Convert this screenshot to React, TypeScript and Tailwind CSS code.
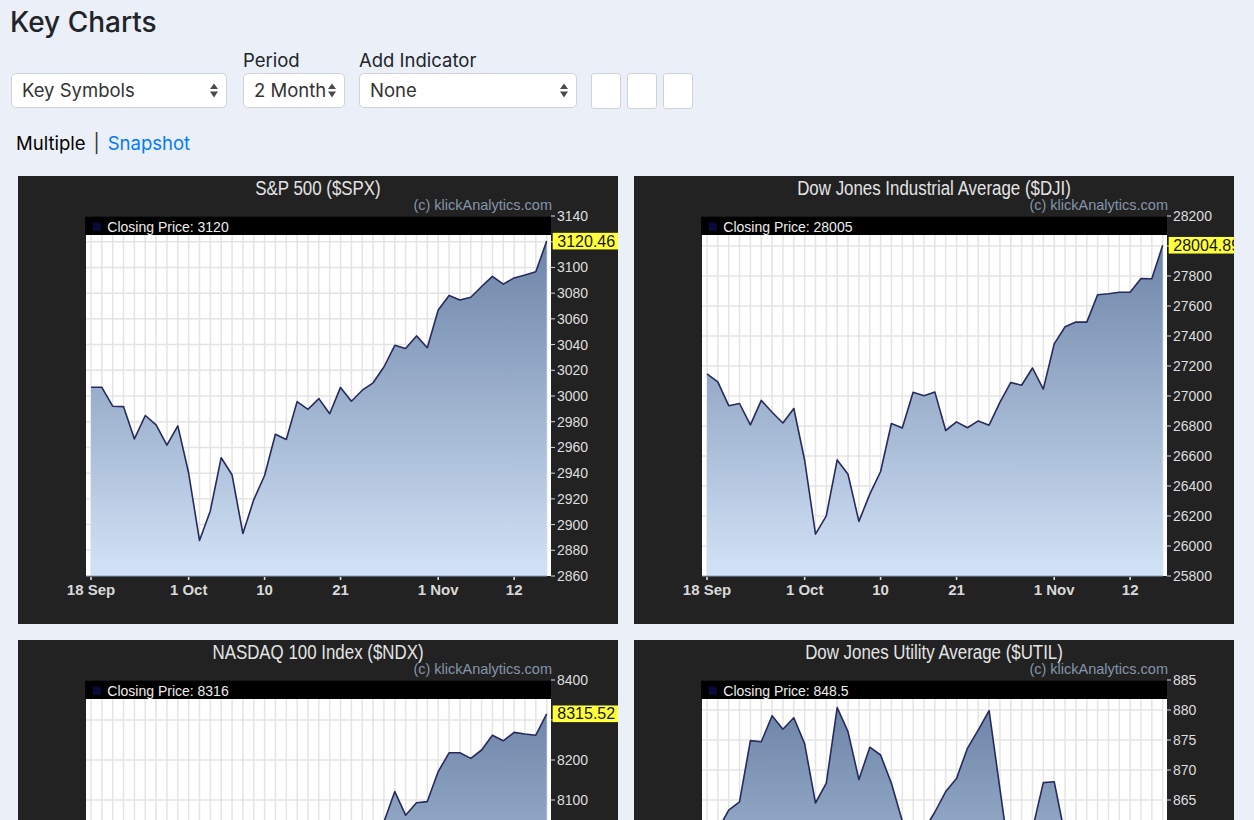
import React from "react";

type ChartSpec = {
  id: string;
  title: string;
  legend: string;
  last: string;
  top: number;
  step: number;
  count: number;
  data: number[];
};

const X0 = 73;
const DX = 10.85;
const PT = 59;
const PB = 400;
const PL = 68;
const PR = 533;

const xTicks = [
  { i: 0, label: "18 Sep" },
  { i: 9, label: "1 Oct" },
  { i: 16, label: "10" },
  { i: 23, label: "21" },
  { i: 32, label: "1 Nov" },
  { i: 39, label: "12" },
];

const charts: ChartSpec[] = [
  {
    id: "spx",
    title: "S&P 500 ($SPX)",
    legend: "Closing Price: 3120",
    last: "3120.46",
    top: 3140,
    step: 20,
    count: 14,
    data: [
      3006.73, 3006.79, 2992.07, 2991.78, 2966.6, 2984.87, 2977.62, 2961.79, 2976.74, 2940.25,
      2887.61, 2910.63, 2952.01, 2938.79, 2893.06, 2919.4, 2938.13, 2970.27, 2966.15, 2995.68,
      2989.69, 2997.95, 2986.2, 3006.72, 2995.99, 3004.52, 3010.29, 3022.55, 3039.42, 3036.89,
      3046.77, 3037.56, 3066.91, 3078.27, 3074.62, 3076.78, 3085.18, 3093.08, 3087.01, 3091.84,
      3094.04, 3096.63, 3120.46,
    ],
  },
  {
    id: "dji",
    title: "Dow Jones Industrial Average ($DJI)",
    legend: "Closing Price: 28005",
    last: "28004.89",
    top: 28200,
    step: 200,
    count: 12,
    data: [
      27147.08, 27094.79, 26935.07, 26949.99, 26807.77, 26970.71, 26891.12, 26820.25, 26916.83,
      26573.04, 26078.62, 26201.04, 26573.72, 26478.02, 26164.04, 26346.01, 26496.67, 26816.59,
      26787.36, 27024.8, 27001.98, 27025.88, 26770.2, 26827.64, 26788.1, 26833.95, 26805.53,
      26958.06, 27090.72, 27071.42, 27186.69, 27046.23, 27347.36, 27462.11, 27492.63, 27492.56,
      27674.8, 27681.24, 27691.49, 27691.49, 27783.59, 27781.96, 28004.89,
    ],
  },
  {
    id: "ndx",
    title: "NASDAQ 100 Index ($NDX)",
    legend: "Closing Price: 8316",
    last: "8315.52",
    top: 8400,
    step: 100,
    count: 9,
    data: [
      7914, 7919, 7823, 7818, 7712, 7798, 7751, 7686, 7749, 7659, 7577, 7630, 7730, 7644, 7574,
      7662, 7728, 7800, 7808, 7896, 7878, 7895, 7850, 7912, 7876, 7911, 7960, 8045, 8121, 8062,
      8093, 8096, 8171, 8218, 8218, 8204, 8225, 8262, 8248, 8269, 8265, 8262, 8315.52,
    ],
  },
  {
    id: "util",
    title: "Dow Jones Utility Average ($UTIL)",
    legend: "Closing Price: 848.5",
    last: "848.50",
    top: 885,
    step: 5,
    count: 12,
    data: [
      857, 860, 863.3, 864.7, 874.9, 874.7, 879.05, 876.8, 878.7, 874.4, 864.5, 867.8, 880.4,
      876.4, 868.4, 873.8, 872.5, 867.8, 861.5, 858, 860, 863, 866.4, 868.6, 873.6, 876.7, 879.9,
      866.9, 853.9, 855, 860.15, 867.9, 868.05, 859, 857, 858, 853, 850, 852, 849, 851, 847, 848.5,
    ],
  },
];

function Chart({ spec }: { spec: ChartSpec }) {
  const span = spec.step * spec.count;
  const toY = (v: number) => 40 + ((spec.top - v) / span) * 360;
  const pts = spec.data.map((v, i) => [X0 + i * DX, toY(v)] as const);
  const line = pts.map(([x, y]) => `${x.toFixed(1)},${y.toFixed(1)}`).join(" ");
  const lastX = pts[pts.length - 1][0];
  const lastY = toY(parseFloat(spec.last));
  const area = `M${X0},${PB} L${line.replace(/ /g, " L")} L${lastX.toFixed(1)},${PB} Z`;
  const levels = Array.from({ length: spec.count + 1 }, (_, k) => ({
    value: spec.top - k * spec.step,
    y: 40 + (k * 360) / spec.count,
  }));

  return (
    <svg width="600" height="448" viewBox="0 0 600 448" className="block bg-[#222222]">
      <defs>
        <linearGradient id={`fill-${spec.id}`} x1="0" y1={PT} x2="0" y2={PB} gradientUnits="userSpaceOnUse">
          <stop offset="0" stopColor="#6a82a6" />
          <stop offset="1" stopColor="#d3e3f7" />
        </linearGradient>
        <clipPath id={`clip-${spec.id}`}>
          <rect x={PL} y={PT} width={PR - PL} height={PB - PT} />
        </clipPath>
      </defs>

      <g fontFamily="'Liberation Sans', Arial, sans-serif">
        <text
          transform="translate(300 19) scale(0.866 1)"
          textAnchor="middle"
          fontSize="19.5"
          fill="#e4e4e4"
        >
          {spec.title}
        </text>
        <text x="534" y="34" textAnchor="end" fontSize="14.5" fill="#8595ab">
          (c) klickAnalytics.com
        </text>

        <rect x="67" y="40.7" width="466" height="18.3" fill="#000" />
        <rect x="74.7" y="46.7" width="8" height="8" fill="#0b0b3b" />
        <text x="89.3" y="56.2" fontSize="14" fill="#ececec">
          {spec.legend}
        </text>

        <rect x={PL} y={PT} width={PR - PL} height={PB - PT} fill="#fff" />
        <g stroke="#e4e4e4" strokeWidth="1.5">
          {spec.data.map((_, i) => (
            <line key={i} x1={X0 + i * DX} y1={PT} x2={X0 + i * DX} y2={PB} />
          ))}
          {levels
            .filter((l) => l.y > PT + 1 && l.y < PB - 1)
            .map((l) => (
              <line key={l.value} x1={PL} y1={l.y} x2={lastX} y2={l.y} />
            ))}
        </g>
        <g clipPath={`url(#clip-${spec.id})`}>
          <path d={area} fill={`url(#fill-${spec.id})`} />
          <polyline points={line} fill="none" stroke="#262a5c" strokeWidth="1.6" strokeLinejoin="round" />
        </g>
        <line x1={PL} y1={PB} x2={lastX} y2={PB} stroke="#8a9cbc" strokeWidth="1" />

        {levels.map((l) => (
          <g key={l.value}>
            <line x1="533" y1={l.y} x2="537" y2={l.y} stroke="#d8d8d8" strokeWidth="1" />
            {Math.abs(l.y - lastY) > 11 && (
              <text x="539" y={l.y + 5} fontSize="14" fill="#dedede">
                {l.value}
              </text>
            )}
          </g>
        ))}

        <rect x="534.7" y={lastY - 8.3} width="70" height="16.6" fill="#ffff3c" />
        <text x="539.3" y={lastY + 5.7} fontSize="16" fill="#151515">
          {spec.last}
        </text>

        {xTicks.map((t) => (
          <g key={t.label}>
            <rect x={X0 + t.i * DX - 0.8} y="401" width="1.6" height="3" fill="#dcdcdc" />
            <text x={X0 + t.i * DX} y="419" textAnchor="middle" fontSize="15" fontWeight="bold" fill="#d9d9d9">
              {t.label}
            </text>
          </g>
        ))}
      </g>
    </svg>
  );
}

function SortArrows() {
  return (
    <svg width="8" height="15" viewBox="0 0 8 15" className="shrink-0">
      <path d="M0 6 L4 0.5 L8 6 Z" fill="#4a4a4a" />
      <path d="M0 8.5 L8 8.5 L4 14.5 Z" fill="#4a4a4a" />
    </svg>
  );
}

function SelectBox({ value, className }: { value: string; className: string }) {
  return (
    <div
      className={`flex h-[35px] items-center justify-between overflow-hidden rounded-[5px] border border-[#cfd3d9] bg-white pl-[10px] pr-[8px] text-[18.5px] text-[#333] ${className}`}
    >
      <span className="overflow-hidden whitespace-nowrap">{value}</span>
      <SortArrows />
    </div>
  );
}

export default function App() {
  return (
    <div className="min-h-screen bg-[#ebeff7] px-[10px] pb-[20px] font-['Inter','Noto_Sans',sans-serif] text-[#212529]">
      <h1 className="pt-[4px] text-[28px] font-medium leading-[36px]">Key Charts</h1>

      <div className="mt-[8px] flex items-end">
        <SelectBox value="Key Symbols" className="ml-[1px] w-[216px]" />
        <div className="ml-[16px] flex flex-col">
          <label className="mb-[1px] h-[24px] text-[18.5px] leading-[24px]">Period</label>
          <SelectBox value="2 Month" className="w-[102px] pl-[10px] pr-[8px]" />
        </div>
        <div className="ml-[14px] flex flex-col">
          <label className="mb-[1px] h-[24px] text-[18.5px] leading-[24px]">Add Indicator</label>
          <SelectBox value="None" className="w-[218px]" />
        </div>
        <div className="mb-[-1px] ml-[14px] flex gap-[6px]">
          <button className="h-[36px] w-[30px] rounded-[3px] border border-[#cfd3d9] bg-white" />
          <button className="h-[36px] w-[30px] rounded-[3px] border border-[#cfd3d9] bg-white" />
          <button className="h-[36px] w-[30px] rounded-[3px] border border-[#cfd3d9] bg-white" />
        </div>
      </div>

      <p className="mt-[23px] flex pl-[6px] text-[18.5px] leading-[24px] text-black">
        <span>Multiple</span>
        <span className="ml-[8px] text-[#333]">|</span>
        <a className="ml-[8px] text-[#007bff]">Snapshot</a>
      </p>

      <div className="ml-[8px] mt-[21px] grid grid-cols-[600px_600px] gap-[16px]">
        {charts.map((c) => (
          <Chart key={c.id} spec={c} />
        ))}
      </div>
    </div>
  );
}
